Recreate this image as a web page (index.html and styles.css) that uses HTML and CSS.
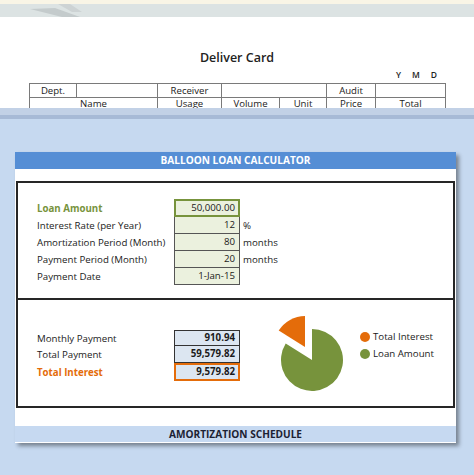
FILE: index.html
```html
<!DOCTYPE html>
<html>
<head>
<meta charset="utf-8">
<link rel="stylesheet" href="styles.css">
</head>
<body>
<div class="sheet-top">
  <div class="strip-cream"></div>
  <div class="strip-gray">
    <svg class="strip-shape" width="160" height="13" viewBox="0 0 160 13"><polygon points="30,5 62,13 80,13 55,4" fill="#c4cbcc"/><polygon points="58,0 72,8 82,8 70,0" fill="#cdd3d4"/></svg>
  </div>
  <div class="deliver-title">Deliver Card</div>
  <div class="ymd"><span>Y</span><span>M</span><span>D</span></div>
  <table class="deliver">
    <colgroup><col style="width:47px"><col style="width:81px"><col style="width:64px"><col style="width:58px"><col style="width:47px"><col style="width:49px"><col style="width:70px"></colgroup>
    <tr><td>Dept.</td><td></td><td>Receiver</td><td colspan="2"></td><td>Audit</td><td></td></tr>
    <tr class="row-cut"><td colspan="2">Name</td><td>Usage</td><td>Volume</td><td>Unit</td><td>Price</td><td>Total</td></tr>
  </table>
</div>
<div class="blue-area">
  <div class="band-light"></div>
  <div class="band-dark"></div>
  <div class="calc">
    <div class="calc-head">BALLOON LOAN CALCULATOR</div>
    <div class="calc-body">
      <div class="inputs">
        <div class="lbl lbl-green">Loan Amount</div><div class="cell cell-first">50,000.00</div><div class="unit"></div>
        <div class="lbl">Interest Rate (per Year)</div><div class="cell">12</div><div class="unit">%</div>
        <div class="lbl">Amortization Period (Month)</div><div class="cell">80</div><div class="unit">months</div>
        <div class="lbl">Payment Period (Month)</div><div class="cell">20</div><div class="unit">months</div>
        <div class="lbl">Payment Date</div><div class="cell">1-Jan-15</div><div class="unit"></div>
      </div>
      <div class="outputs">
        <div class="out-grid">
          <div class="lbl">Monthly Payment</div><div class="ocell ocell-first">910.94</div>
          <div class="lbl">Total Payment</div><div class="ocell">59,579.82</div>
          <div class="lbl lbl-orange">Total Interest</div><div class="ocell ocell-hl">9,579.82</div>
        </div>
        <svg class="pie" width="90" height="90" viewBox="0 0 90 90">
          <path d="M42,52 L42,21 A31,31 0 1 1 15.71,35.57 Z" fill="#77933c"/>
          <path d="M35,39 L35,8 A31,31 0 0 0 8.71,22.57 Z" fill="#e46c0a"/>
        </svg>
        <div class="legend">
          <div class="leg-item"><span class="dot dot-orange"></span>Total Interest</div>
          <div class="leg-item"><span class="dot dot-green"></span>Loan Amount</div>
        </div>
      </div>
    </div>
    <div class="calc-foot">AMORTIZATION SCHEDULE</div>
  </div>
</div>
</body>
</html>
```
FILE: styles.css
```css
html, body { margin: 0; padding: 0; }
body {
  width: 474px;
  height: 475px;
  overflow: hidden;
  background: #c6d9f0;
  font-family: "Open Sans", "Liberation Sans", sans-serif;
  color: #1a1a1a;
}
.sheet-top {
  height: 108px;
  background: #fff;
  overflow: hidden;
}
.strip-cream { height: 4px; background: #f9f5e6; }
.strip-gray { height: 13px; background: #dce3e3; }
.strip-shape { display: block; }
.deliver-title {
  margin-top: 33px;
  text-align: center;
  font-size: 12.5px;
  font-weight: 600;
  line-height: 16px;
  color: #222;
}
.ymd {
  display: flex;
  justify-content: flex-end;
  gap: 11px;
  padding-right: 37px;
  margin-top: 3px;
  font-size: 8.5px;
  font-weight: 600;
  line-height: 11px;
  color: #222;
}
.deliver {
  margin: 3px 0 0 29px;
  width: 416px;
  border-collapse: collapse;
  table-layout: fixed;
  font-size: 9.6px;
  color: #222;
}
.deliver td {
  border: 1px solid #7a7a7a;
  height: 13px;
  padding: 0;
  text-align: center;
  line-height: 13px;
}
.deliver .row-cut td {
  vertical-align: top;
  line-height: 11px;
}
.blue-area { height: 367px; }
.band-light { height: 7px; background: #c2d1e6; }
.band-dark { height: 4px; background: #a7bad6; }
.calc {
  margin: 33px 0 0 15px;
  width: 441px;
  background: #fff;
  box-shadow: 3px 3px 4px rgba(0, 0, 0, 0.4);
  padding-bottom: 1px;
}
.calc-head {
  height: 17px;
  background: #558ed5;
  color: #fff;
  font-weight: 700;
  font-size: 10.1px;
  line-height: 17px;
  text-align: center;
}
.calc-body {
  margin: 12px 1px 0 1px;
  border: 2px solid #262626;
}
.inputs {
  display: grid;
  grid-template-columns: 137px 66px auto;
  grid-auto-rows: 17px;
  grid-template-rows: 18px;
  padding: 16px 0 13px 19px;
  font-size: 9.7px;
  align-items: center;
}
.lbl { line-height: 17px; white-space: nowrap; }
.lbl-green { color: #77933c; font-weight: 700; }
.lbl-orange { color: #e46c0a; font-weight: 700; }
.cell {
  height: 100%;
  box-sizing: border-box;
  background: #ebf1de;
  border: 1px solid #555;
  border-top: none;
  text-align: right;
  padding-right: 4px;
  line-height: 16px;
}
.cell-first {
  border: 2px solid #77933c;
  line-height: 14px;
  padding-right: 3px;
}
.unit { padding-left: 3px; line-height: 17px; }
.outputs {
  border-top: 2px solid #262626;
  height: 106px;
  display: flex;
  align-items: flex-start;
}
.out-grid {
  display: grid;
  grid-template-columns: 137px 66px;
  grid-template-rows: 16px 17px 18px;
  margin: 30px 0 0 19px;
  font-size: 9.7px;
  align-items: center;
}
.ocell {
  height: 100%;
  box-sizing: border-box;
  background: #dce6f1;
  border: 1px solid #333;
  border-top: none;
  text-align: right;
  font-weight: 700;
  padding-right: 4px;
  line-height: 16px;
}
.ocell-first { border-top: 1px solid #333; line-height: 14px; }
.ocell-hl { border: 2px solid #e46c0a; line-height: 14px; padding-right: 3px; }
.pie { margin: 8px 0 0 30px; display: block; }
.legend {
  margin: 30px 0 0 0;
  font-size: 9.7px;
  display: flex;
  flex-direction: column;
  gap: 3px;
}
.leg-item { display: flex; align-items: center; gap: 3px; line-height: 14px; }
.dot { width: 10px; height: 10px; border-radius: 50%; display: inline-block; }
.dot-orange { background: #e46c0a; }
.dot-green { background: #77933c; }
.calc-foot {
  margin-top: 18px;
  height: 16px;
  background: #c6d9f1;
  font-weight: 700;
  font-size: 10.1px;
  line-height: 16px;
  text-align: center;
  color: #1c2233;
}
```
